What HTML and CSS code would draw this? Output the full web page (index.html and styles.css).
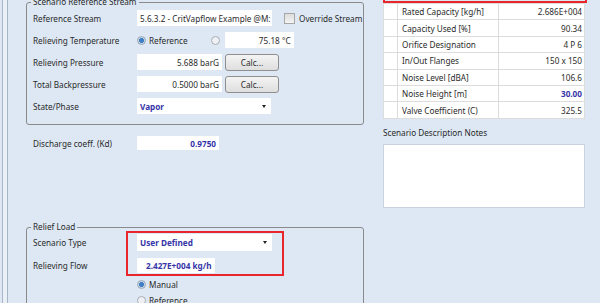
FILE: index.html
```html
<!DOCTYPE html>
<html>
<head>
<meta charset="utf-8">
<link rel="stylesheet" href="styles.css">
</head>
<body>
<div class="app">
  <div class="sidebar"></div>
  <div class="left">
    <fieldset class="group ref">
      <legend>Scenario Reference Stream</legend>
      <div class="row">
        <span class="label">Reference Stream</span>
        <span class="field w-stream left-text">5.6.3.2 - CritVapflow Example @M:</span>
        <span class="check"></span>
        <span class="check-label">Override Stream</span>
      </div>
      <div class="row">
        <span class="label">Relieving Temperature</span>
        <span class="radio on"></span>
        <span class="radio-label">Reference</span>
        <span class="radio off gap-radio"></span>
        <span class="field w-temp">75.18 °C</span>
      </div>
      <div class="row">
        <span class="label">Relieving Pressure</span>
        <span class="field w-num">5.688 barG</span>
        <span class="btn">Calc...</span>
      </div>
      <div class="row">
        <span class="label">Total Backpressure</span>
        <span class="field w-num">0.5000 barG</span>
        <span class="btn">Calc...</span>
      </div>
      <div class="row">
        <span class="label">State/Phase</span>
        <span class="field select w-select"><b class="blue">Vapor</b><span class="caret"></span></span>
      </div>
    </fieldset>

    <div class="row kd">
      <span class="label">Discharge coeff. (Kd)</span>
      <span class="field w-kd"><b class="blue">0.9750</b></span>
    </div>

    <fieldset class="group relief">
      <legend>Relief Load</legend>
      <div class="relief-top">
        <div class="relief-labels">
          <span class="rl1">Scenario Type</span>
          <span class="rl2">Relieving Flow</span>
        </div>
        <div class="hl-box">
          <span class="field select w-select2"><b class="blue">User Defined</b><span class="caret"></span></span>
          <span class="field w-flow left-text"><b class="blue">2.427E+004 kg/h</b></span>
        </div>
      </div>
      <div class="radios">
        <div class="radio-row"><span class="radio on"></span><span class="radio-label">Manual</span></div>
        <div class="radio-row"><span class="radio off"></span><span class="radio-label">Reference</span></div>
      </div>
    </fieldset>
  </div>

  <div class="right">
    <div class="hl-row"></div>
    <table class="grid">
      <tr><td class="rh"></td><td class="k">Rated Capacity [kg/h]</td><td class="v">2.686E+004</td></tr>
      <tr><td class="rh"></td><td class="k">Capacity Used [%]</td><td class="v">90.34</td></tr>
      <tr><td class="rh"></td><td class="k">Orifice Designation</td><td class="v">4 P 6</td></tr>
      <tr><td class="rh"></td><td class="k">In/Out Flanges</td><td class="v">150 x 150</td></tr>
      <tr><td class="rh"></td><td class="k">Noise Level [dBA]</td><td class="v">106.6</td></tr>
      <tr><td class="rh"></td><td class="k">Noise Height [m]</td><td class="v"><b class="blue">30.00</b></td></tr>
      <tr><td class="rh"></td><td class="k">Valve Coefficient (C)</td><td class="v">325.5</td></tr>
    </table>
    <div class="notes-label">Scenario Description Notes</div>
    <div class="notes"></div>
  </div>
</div>
</body>
</html>
```

FILE: styles.css
```css
* { box-sizing: border-box; }
html, body { margin: 0; padding: 0; }
body {
  width: 600px;
  height: 303px;
  overflow: hidden;
  background: #dde8f4;
  font-family: "Noto Sans", "Open Sans", sans-serif;
  font-size: 8.2px;
  color: #2a2a2a;
}
.app {
  display: flex;
  align-items: flex-start;
  height: 303px;
  overflow: hidden;
}
.sidebar {
  width: 6px;
  height: 303px;
  margin-left: 2px;
  border-left: 1px solid #a9b6c6;
  border-right: 1px solid #a9b6c6;
  background: #e9f0f8;
  flex: none;
}
.left {
  width: 338px;
  height: 307px;
  margin-left: 18px;
  margin-top: -4px;
  overflow: hidden;
  flex: none;
}
.group {
  margin: 0;
  padding: 0 6px 7px 6px;
  border: 1px solid #8a8a8a;
  border-radius: 3px;
  min-width: 0;
}
.group legend {
  padding: 0 2px;
  margin-left: -2px;
  line-height: 12px;
  color: #2a2a2a;
}
.ref { height: 129px; }
.row {
  display: flex;
  align-items: center;
  height: 22px;
  white-space: nowrap;
}
.ref .row:first-of-type { margin-top: -1px; }
.label {
  width: 104px;
  flex: none;
}
.field {
  display: flex;
  align-items: center;
  justify-content: flex-end;
  height: 16px;
  background: #ffffff;
  padding: 0 3px;
  white-space: nowrap;
  overflow: hidden;
  flex: none;
}
.left-text { justify-content: flex-start; }
.w-stream { width: 135px; }
.w-temp { width: 69px; margin-left: 5px; }
.w-num { width: 85px; }
.w-select { width: 134px; }
.w-kd { width: 82px; height: 14px; }
.w-select2 { width: 135px; height: 17px; }
.w-flow { width: 78px; height: 15px; padding-left: 9px; }
.select { justify-content: space-between; }
.blue { color: #3535a8; font-weight: 700; }
.caret {
  width: 0; height: 0;
  border-left: 2.5px solid transparent;
  border-right: 2.5px solid transparent;
  border-top: 3px solid #222;
  margin-right: 2px;
}
.check {
  width: 11px; height: 11px;
  margin-left: 12px;
  border: 1px solid #a7a7a7;
  background: linear-gradient(#dcdcdc, #f4f4f4);
  flex: none;
}
.check-label { margin-left: 4px; }
.radio {
  width: 9px; height: 9px;
  border-radius: 50%;
  border: 1px solid #a9aeb5;
  background: #eef0f3;
  flex: none;
}
.radio.on {
  background: radial-gradient(circle, #3f7fc4 0 2.2px, #c7d6e6 2.6px);
  border-color: #9aa9ba;
}
.radio-label { margin-left: 3px; }
.gap-radio { margin-left: 23px; }
.btn {
  width: 54px;
  height: 17px;
  margin-left: 3px;
  display: flex;
  align-items: center;
  justify-content: center;
  border: 1px solid #8f8f8f;
  border-radius: 3px;
  background: linear-gradient(#f4f4f4, #dedede);
  flex: none;
}
.kd { margin-top: 7px; margin-left: 7px; }
.relief { margin-top: 67px; height: 120px; }
.relief-top {
  display: flex;
  margin-top: -2px;
}
.relief-labels {
  width: 93px;
  display: flex;
  flex-direction: column;
  padding-top: 3px;
  flex: none;
}
.rl1 { height: 17px; line-height: 17px; }
.rl2 { height: 15px; line-height: 15px; margin-top: 7px; }
.hl-box {
  border: 2px solid #e8262b;
  padding: 1px 10px 1px 9px;
  display: flex;
  flex-direction: column;
  gap: 7px;
  align-items: flex-start;
}
.radios { padding-left: 104px; padding-top: 0; }
.radio-row { display: flex; align-items: center; height: 16px; white-space: nowrap; }

.right {
  width: 204px;
  margin-left: 19px;
  margin-top: -15px;
  flex: none;
}
.hl-row {
  height: 18px;
  width: 204px;
  border: 2px solid #e8262b;
}
.grid {
  width: 202px;
  border-collapse: collapse;
  background: #fff;
  table-layout: fixed;
}
.grid td {
  height: 16.4px;
  padding: 0 2px 0 4px;
  border: 1px solid #dcdcdc;
  white-space: nowrap;
  overflow: hidden;
}
.grid .rh { width: 14px; }
.grid .k { width: 101px; }
.grid .v { text-align: right; }
.notes-label { margin-top: 8px; line-height: 12px; }
.notes {
  margin-top: 5px;
  width: 202px;
  height: 64px;
  background: #fff;
  border: 1px solid #c9d3de;
}
```
